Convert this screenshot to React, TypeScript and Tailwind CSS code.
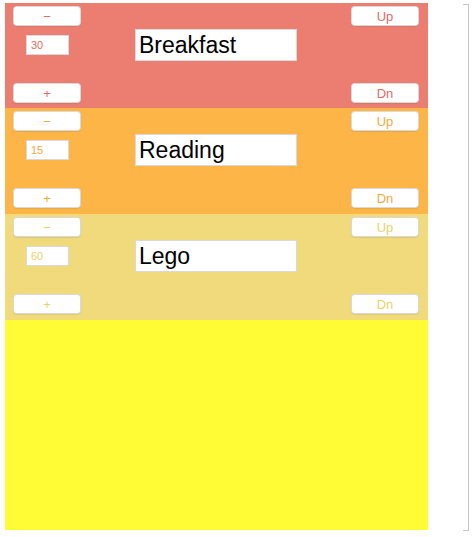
import React from "react";

type Item = { title: string; mins: string; bg: string; text: string; h: string };

const items: Item[] = [
  { title: "Breakfast", mins: "30", bg: "bg-[#ec7d71]", text: "text-[#e66a5f]", h: "h-[105px]" },
  { title: "Reading", mins: "15", bg: "bg-[#fdb547]", text: "text-[#f4a93b]", h: "h-[106px]" },
  { title: "Lego", mins: "60", bg: "bg-[#f0da7b]", text: "text-[#ebd26c]", h: "h-[106px]" },
];

function Btn({ label, text }: { label: string; text: string }) {
  return (
    <button
      className={`w-[68px] h-[20px] bg-white rounded-[4px] border border-black/15 shadow-[0_1px_1px_rgba(0,0,0,0.08)] text-[13px] leading-none flex items-center justify-center ${text}`}
    >
      {label}
    </button>
  );
}

function Row({ item }: { item: Item }) {
  return (
    <div className={`${item.h} ${item.bg} flex justify-between pl-[8px] pr-[9px]`}>
      <div className="w-[68px] flex flex-col pt-[3px]">
        <Btn label="−" text={item.text} />
        <div
          className={`mt-[9px] ml-[13px] w-[43px] h-[20px] bg-white border border-black/15 text-[11px] pl-[4px] flex items-center ${item.text}`}
        >
          {item.mins}
        </div>
        <div className="mt-[28px]">
          <Btn label="+" text={item.text} />
        </div>
      </div>
      <div className="mt-[26px] w-[162px] h-[32px] bg-white border border-black/15 text-[23px] text-black pl-[3px] flex items-center leading-none">
        {item.title}
      </div>
      <div className="w-[68px] flex flex-col pt-[3px]">
        <Btn label="Up" text={item.text} />
        <div className="mt-[57px]">
          <Btn label="Dn" text={item.text} />
        </div>
      </div>
    </div>
  );
}

export default function App() {
  return (
    <div
      className="w-[474px] h-[537px] bg-white flex"
      style={{ fontFamily: '"Liberation Sans", Arial, sans-serif' }}
    >
      <div className="ml-[5px] mt-[3px] w-[423px] flex flex-col">
        {items.map((it) => (
          <Row key={it.title} item={it} />
        ))}
        <div className="h-[210px] bg-[#fffc35]" />
      </div>
      <div className="ml-[35px] mt-[4px] w-[6px] h-[527px] border-t border-b border-r border-[#c8c8c8]" />
    </div>
  );
}
